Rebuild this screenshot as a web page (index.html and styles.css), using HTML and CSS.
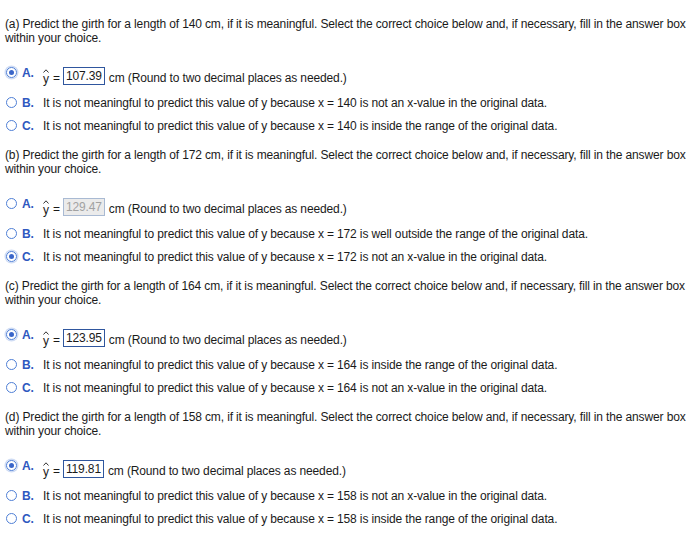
FILE: index.html
```html
<!DOCTYPE html>
<html lang="en">
<head>
    <meta charset="UTF-8">
    <title>Predict the girth</title>
    <link rel="stylesheet" href="styles.css">
</head>
<body>
    <div class="part">
        <div class="question">(a) Predict the girth for a length of 140 cm, if it is meaningful. Select the correct choice below and, if necessary, fill in the answer box within your choice.</div>
        <div class="choice choice-answer">
            <span class="radio checked"></span>
            <span class="letter">A.</span>
            <span class="body">
                <span class="yhat"><svg class="hat" width="6" height="4" viewBox="0 0 6 4"><path d="M0.5 3.5L3 0.8L5.5 3.5" fill="none" stroke="#333" stroke-width="1"/></svg>y</span> =
                <span class="box">107.39</span>
                cm (Round to two decimal places as needed.)
            </span>
        </div>
        <div class="choice">
            <span class="radio"></span>
            <span class="letter">B.</span>
            <span class="body">It is not meaningful to predict this value of y because x = 140 is not an x-value in the original data.</span>
        </div>
        <div class="choice">
            <span class="radio"></span>
            <span class="letter">C.</span>
            <span class="body">It is not meaningful to predict this value of y because x = 140 is inside the range of the original data.</span>
        </div>
    </div>

    <div class="part">
        <div class="question">(b) Predict the girth for a length of 172 cm, if it is meaningful. Select the correct choice below and, if necessary, fill in the answer box within your choice.</div>
        <div class="choice choice-answer">
            <span class="radio"></span>
            <span class="letter">A.</span>
            <span class="body">
                <span class="yhat"><svg class="hat" width="6" height="4" viewBox="0 0 6 4"><path d="M0.5 3.5L3 0.8L5.5 3.5" fill="none" stroke="#333" stroke-width="1"/></svg>y</span> =
                <span class="box disabled">129.47</span>
                cm (Round to two decimal places as needed.)
            </span>
        </div>
        <div class="choice">
            <span class="radio"></span>
            <span class="letter">B.</span>
            <span class="body">It is not meaningful to predict this value of y because x = 172 is well outside the range of the original data.</span>
        </div>
        <div class="choice">
            <span class="radio checked"></span>
            <span class="letter">C.</span>
            <span class="body">It is not meaningful to predict this value of y because x = 172 is not an x-value in the original data.</span>
        </div>
    </div>

    <div class="part">
        <div class="question">(c) Predict the girth for a length of 164 cm, if it is meaningful. Select the correct choice below and, if necessary, fill in the answer box within your choice.</div>
        <div class="choice choice-answer">
            <span class="radio checked"></span>
            <span class="letter">A.</span>
            <span class="body">
                <span class="yhat"><svg class="hat" width="6" height="4" viewBox="0 0 6 4"><path d="M0.5 3.5L3 0.8L5.5 3.5" fill="none" stroke="#333" stroke-width="1"/></svg>y</span> =
                <span class="box">123.95</span>
                cm (Round to two decimal places as needed.)
            </span>
        </div>
        <div class="choice">
            <span class="radio"></span>
            <span class="letter">B.</span>
            <span class="body">It is not meaningful to predict this value of y because x = 164 is inside the range of the original data.</span>
        </div>
        <div class="choice">
            <span class="radio"></span>
            <span class="letter">C.</span>
            <span class="body">It is not meaningful to predict this value of y because x = 164 is not an x-value in the original data.</span>
        </div>
    </div>

    <div class="part">
        <div class="question">(d) Predict the girth for a length of 158 cm, if it is meaningful. Select the correct choice below and, if necessary, fill in the answer box within your choice.</div>
        <div class="choice choice-answer">
            <span class="radio checked"></span>
            <span class="letter">A.</span>
            <span class="body">
                <span class="yhat"><svg class="hat" width="6" height="4" viewBox="0 0 6 4"><path d="M0.5 3.5L3 0.8L5.5 3.5" fill="none" stroke="#333" stroke-width="1"/></svg>y</span> =
                <span class="box">119.81</span>
                cm (Round to two decimal places as needed.)
            </span>
        </div>
        <div class="choice">
            <span class="radio"></span>
            <span class="letter">B.</span>
            <span class="body">It is not meaningful to predict this value of y because x = 158 is not an x-value in the original data.</span>
        </div>
        <div class="choice">
            <span class="radio"></span>
            <span class="letter">C.</span>
            <span class="body">It is not meaningful to predict this value of y because x = 158 is inside the range of the original data.</span>
        </div>
    </div>
</body>
</html>
```

FILE: styles.css
```css
body {
    font-family: "Liberation Sans", Arial, sans-serif;
    font-size: 12px;
    letter-spacing: -0.13px;
    color: #1a1a1a;
    margin: 0;
    padding: 17px 0 0 5px;
    background: white;
}
.part {
    margin-bottom: 11px;
}
.question {
    line-height: 14px;
    margin-bottom: 19px;
    padding-right: 4px;
}
.choice {
    display: flex;
    align-items: center;
    height: 23px;
}
.choice-answer {
    height: 27px;
    align-items: flex-start;
}
.radio {
    width: 9px;
    height: 9px;
    border: 1.5px solid #4f7fd6;
    border-radius: 50%;
    margin-left: 1px;
    box-sizing: content-box;
    display: flex;
    align-items: center;
    justify-content: center;
}
.radio.checked {
    box-shadow: 0 0 0 1.5px #cfdcf4;
}
.radio.checked::after {
    content: "";
    width: 5px;
    height: 5px;
    border-radius: 50%;
    background: #3a66c9;
}
.letter {
    color: #2f58c0;
    font-weight: bold;
    margin-left: 5px;
    width: 21px;
}
.choice-answer .radio {
    margin-top: 3px;
}
.choice-answer .letter {
    line-height: 14px;
    margin-top: 2px;
}
.choice-answer .body {
    display: flex;
    align-items: flex-end;
    gap: 3px;
    height: 21px;
}
.yhat {
    display: inline-flex;
    flex-direction: column;
    align-items: center;
    line-height: 11px;
    margin-right: 1px;
}
.hat {
    display: block;
    margin-bottom: 1px;
}
.box {
    display: inline-block;
    border: 1px solid #2f569e;
    padding: 0 2px;
    height: 16px;
    line-height: 16px;
    margin: 0 1px 0 0;
}
.box.disabled {
    border-color: #a9bad3;
    background: #ebebeb;
    color: #a2a2a2;
}
```
